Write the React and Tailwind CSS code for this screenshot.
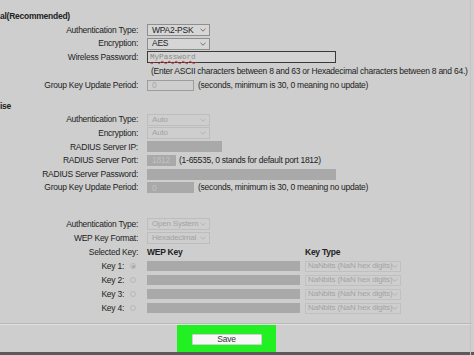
import React from "react";

const Chevron = ({ color = "#666" }) => (
  <svg width="6" height="4" viewBox="0 0 6 4" className="shrink-0">
    <polyline points="0.5,0.8 3,3.2 5.5,0.8" fill="none" stroke={color} strokeWidth="0.9" />
  </svg>
);

const Select = ({ value, disabled, w = "w-[63px]" }) => (
  <div
    className={`${w} h-[12px] flex items-center justify-between pl-[4px] pr-[3px] border overflow-hidden ${
      disabled ? "border-[#bdbdbd] text-[#a3a3a3] text-[8px] tracking-[-0.2px]" : "border-[#8e8e8e] text-[#222] bg-[#d6d6d6]"
    }`}
  >
    <span className="leading-none whitespace-nowrap">{value}</span>
    <Chevron color={disabled ? "#b0b0b0" : "#666"} />
  </div>
);

const Row = ({ label, children, h = "h-[13.8px]" }) => (
  <div className={`flex items-center ${h}`}>
    <div className="w-[139px] text-right shrink-0 pr-[1px] whitespace-nowrap">{label}</div>
    <div className="ml-[8px] flex items-center">{children}</div>
  </div>
);

const GrayBox = ({ w, text }) => (
  <div className={`${w} h-[11px] bg-[#a9a9a9] flex items-center pl-[5px] text-[#c2c2c2] leading-none`}>
    {text}
  </div>
);

const Radio = ({ checked }) => (
  <div className="ml-[6px] mr-[2px] w-[6px] h-[6px] rounded-full border border-[#b8b8b8] flex items-center justify-center">
    {checked && <div className="w-[3px] h-[3px] rounded-full bg-[#a8a8a8]" />}
  </div>
);

export default function App() {
  return (
    <div
      className="w-[474px] h-[355px] bg-[#cecece] text-[#222] text-[8.5px] tracking-[-0.25px] overflow-hidden relative flex flex-col"
      style={{ fontFamily: '"Liberation Sans", Arial, sans-serif' }}
    >
      <div className="absolute top-0 bottom-0 left-[470px] w-[1px] bg-[#c4c4c4]" />
      <div className="h-[9px]" />
      <div className="h-[14px] flex items-center font-bold">al(Recommended)</div>
      <Row label="Authentication Type:">
        <Select value="WPA2-PSK" />
      </Row>
      <Row label="Encryption:">
        <Select value="AES" />
      </Row>
      <Row label="Wireless Password:">
        <div className="w-[189px] h-[12px] border-[1.5px] border-[#3a3a3a] bg-[#d3d3d3] flex items-center pl-[2px]">
          <span
            className="text-[#8a8a8a] leading-none tracking-normal underline decoration-wavy decoration-[#d04040] decoration-[0.8px] underline-offset-[1px]"
            style={{ fontFamily: '"Liberation Mono", monospace', fontSize: "7.6px" }}
          >
            MyPassword
          </span>
        </div>
      </Row>
      <Row label="">
        <span className="ml-[4px] whitespace-nowrap">
          (Enter ASCII characters between 8 and 63 or Hexadecimal characters between 8 and 64.)
        </span>
      </Row>
      <Row label="Group Key Update Period:">
        <div className="w-[47px] h-[11px] border border-[#9c9c9c] flex items-center pl-[4px] text-[#a8a8a8] leading-none">0</div>
        <span className="ml-[4px] whitespace-nowrap">(seconds, minimum is 30, 0 meaning no update)</span>
      </Row>

      <div className="h-[7px]" />
      <div className="h-[14px] flex items-center font-bold">ise</div>
      <Row label="Authentication Type:" h="h-[13.6px]">
        <Select value="Auto" disabled />
      </Row>
      <Row label="Encryption:" h="h-[13.6px]">
        <Select value="Auto" disabled />
      </Row>
      <Row label="RADIUS Server IP:" h="h-[13.6px]">
        <GrayBox w="w-[75px]" />
      </Row>
      <Row label="RADIUS Server Port:" h="h-[13.6px]">
        <GrayBox w="w-[29px]" text="1812" />
        <span className="ml-[3px] whitespace-nowrap">(1-65535, 0 stands for default port 1812)</span>
      </Row>
      <Row label="RADIUS Server Password:" h="h-[13.6px]">
        <GrayBox w="w-[189px]" />
      </Row>
      <Row label="Group Key Update Period:" h="h-[13.6px]">
        <GrayBox w="w-[47px]" text="0" />
        <span className="ml-[4px] whitespace-nowrap">(seconds, minimum is 30, 0 meaning no update)</span>
      </Row>

      <div className="h-[22.6px]" />
      <Row label="Authentication Type:" h="h-[14px]">
        <Select value="Open System" disabled />
      </Row>
      <Row label="WEP Key Format:" h="h-[14px]">
        <Select value="Hexadecimal" disabled />
      </Row>
      <Row label="Selected Key:" h="h-[14px]">
        <span className="font-bold w-[158px]">WEP Key</span>
        <span className="font-bold">Key Type</span>
      </Row>
      {[1, 2, 3, 4].map((n) => (
        <div key={n} className="flex items-center h-[14px]">
          <div className="w-[139px] shrink-0 flex items-center justify-end pr-[1px]">
            <span>Key {n}:</span>
            <Radio checked={n === 1} />
          </div>
          <div className="ml-[8px] flex items-center">
            <div className="w-[153px] h-[10px] bg-[#a9a9a9]" />
            <div className="ml-[5px] w-[96px] h-[11px] border border-[#c0c0c0] flex items-center justify-between pl-[2px] pr-[3px] text-[#a3a3a3] text-[8px] tracking-[-0.15px] overflow-hidden">
              <span className="leading-none whitespace-nowrap">NaNbits (NaN hex digits)</span>
              <Chevron color="#b0b0b0" />
            </div>
          </div>
        </div>
      ))}

      <div className="h-[8px]" />
      <div className="h-[1px] bg-[#b8b8b8] w-[472px]" />
      <div className="h-[1px] bg-[#e0e0e0] w-[472px]" />
      <div className="flex-1 flex">
        <div className="ml-[177px] w-[99px] bg-[#22f022] flex items-start justify-center pt-[9px]">
          <div className="w-[70px] h-[11px] bg-[#f8f8f8] border border-[#d0d0d0] rounded-[1px] flex items-center justify-center text-[#333] leading-none">
            Save
          </div>
        </div>
      </div>
      <div className="h-[3px] bg-[#5a5a5a]" />
    </div>
  );
}
